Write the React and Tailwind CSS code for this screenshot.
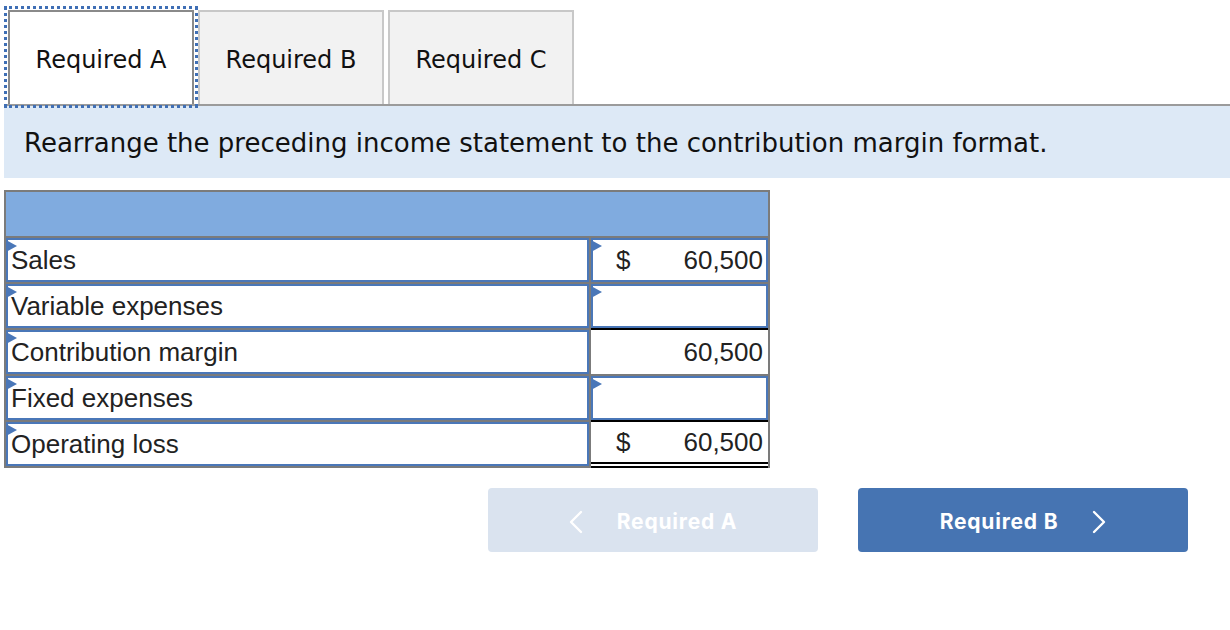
import React from "react";

const verdana = { fontFamily: '"DejaVu Sans", Verdana, sans-serif' };
const arial = { fontFamily: '"Liberation Sans", Arial, sans-serif' };
const btnFont = { fontFamily: 'Inter, "Liberation Sans", sans-serif' };

function Tri() {
  return (
    <svg className="absolute left-[-2px] top-0" width="11" height="12" viewBox="0 0 11 12">
      <polygon points="0,0 11,6 0,12" fill="#4a77b8" />
    </svg>
  );
}

function LabelCell({ children }) {
  return (
    <div className="relative bg-white border-2 border-[#4a77b8] flex items-center pl-[3px] pt-[1px] text-[26px] text-[#222]" style={arial}>
      <Tri />
      <span>{children}</span>
    </div>
  );
}

function InputValue({ dollar, value }) {
  return (
    <div className="relative bg-white border-2 border-[#4a77b8] flex items-center pl-[23px] pr-[3px] pt-[1px] text-[26px] text-[#222]" style={arial}>
      <Tri />
      <span>{dollar ? "$" : ""}</span>
      <span className="ml-auto">{value}</span>
    </div>
  );
}

function Chevron({ dir }) {
  return (
    <svg width="14" height="24" viewBox="0 0 14 24" fill="none">
      <polyline
        points={dir === "left" ? "12,2 2,12 12,22" : "2,2 12,12 2,22"}
        stroke="white"
        strokeWidth="2.4"
        strokeLinecap="round"
        strokeLinejoin="round"
      />
    </svg>
  );
}

export default function App() {
  return (
    <div className="w-[1230px] h-[630px] bg-white pl-[4px] overflow-hidden">
      {/* Tabs */}
      <div className="flex gap-[4px] pt-[10px] pl-[4px] border-b-2 border-[#9b9b9b]" style={verdana}>
        <div className="w-[186px] h-[94px] bg-white border-2 border-b-0 border-[#8a8a8a] flex items-center justify-center pt-[4px] text-[24px] text-[#111] outline-[3px] outline-dotted outline-[#3f6fb5] outline-offset-[1px] mb-[-2px]">
          Required A
        </div>
        <div className="w-[186px] h-[94px] bg-[#f2f2f2] border-2 border-b-0 border-[#c8c8c8] flex items-center justify-center pt-[4px] text-[24px] text-[#111]">
          Required B
        </div>
        <div className="w-[186px] h-[94px] bg-[#f2f2f2] border-2 border-b-0 border-[#c8c8c8] flex items-center justify-center pt-[4px] text-[24px] text-[#111]">
          Required C
        </div>
      </div>

      {/* Instruction band */}
      <div className="h-[72px] bg-[#dde9f6] flex items-center px-[20px] pt-[3px] text-[26px] text-[#111]" style={verdana}>
        Rearrange the preceding income statement to the contribution margin format.
      </div>

      {/* Table */}
      <div className="mt-[12px] w-[766px] grid grid-cols-[583px_177px] auto-rows-[44px] gap-[2px] p-[2px] bg-[#7b7b7b]">
        <div className="col-span-2 bg-[#80abdf]" />

        <LabelCell>Sales</LabelCell>
        <InputValue dollar value="60,500" />

        <LabelCell>Variable expenses</LabelCell>
        <InputValue />

        <LabelCell>Contribution margin</LabelCell>
        <div className="bg-white -mt-[2px] border-t-2 border-black flex items-center justify-end pr-[5px] pt-[1px] text-[26px] text-[#222]" style={arial}>
          60,500
        </div>

        <LabelCell>Fixed expenses</LabelCell>
        <InputValue />

        <LabelCell>Operating loss</LabelCell>
        <div className="bg-white -mt-[2px] -mb-[2px] border-t-2 border-black border-b-[6px] border-b-black border-double flex items-center pl-[25px] pr-[5px] text-[26px] text-[#222]" style={arial}>
          <span>$</span>
          <span className="ml-auto">60,500</span>
        </div>
      </div>

      {/* Nav buttons */}
      <div className="mt-[20px] flex justify-end gap-[40px] pr-[42px]" style={btnFont}>
        <div className="w-[330px] h-[64px] rounded-[4px] bg-[#dae3ef] flex items-center justify-center gap-[34px] pt-[3px] text-white text-[21px] font-bold tracking-[0.8px]">
          <Chevron dir="left" />
          <span>Required A</span>
        </div>
        <div className="w-[330px] h-[64px] rounded-[4px] bg-[#4674b2] flex items-center justify-center gap-[34px] pt-[3px] text-white text-[21px] font-bold tracking-[0.8px]">
          <span>Required B</span>
          <Chevron dir="right" />
        </div>
      </div>
    </div>
  );
}
